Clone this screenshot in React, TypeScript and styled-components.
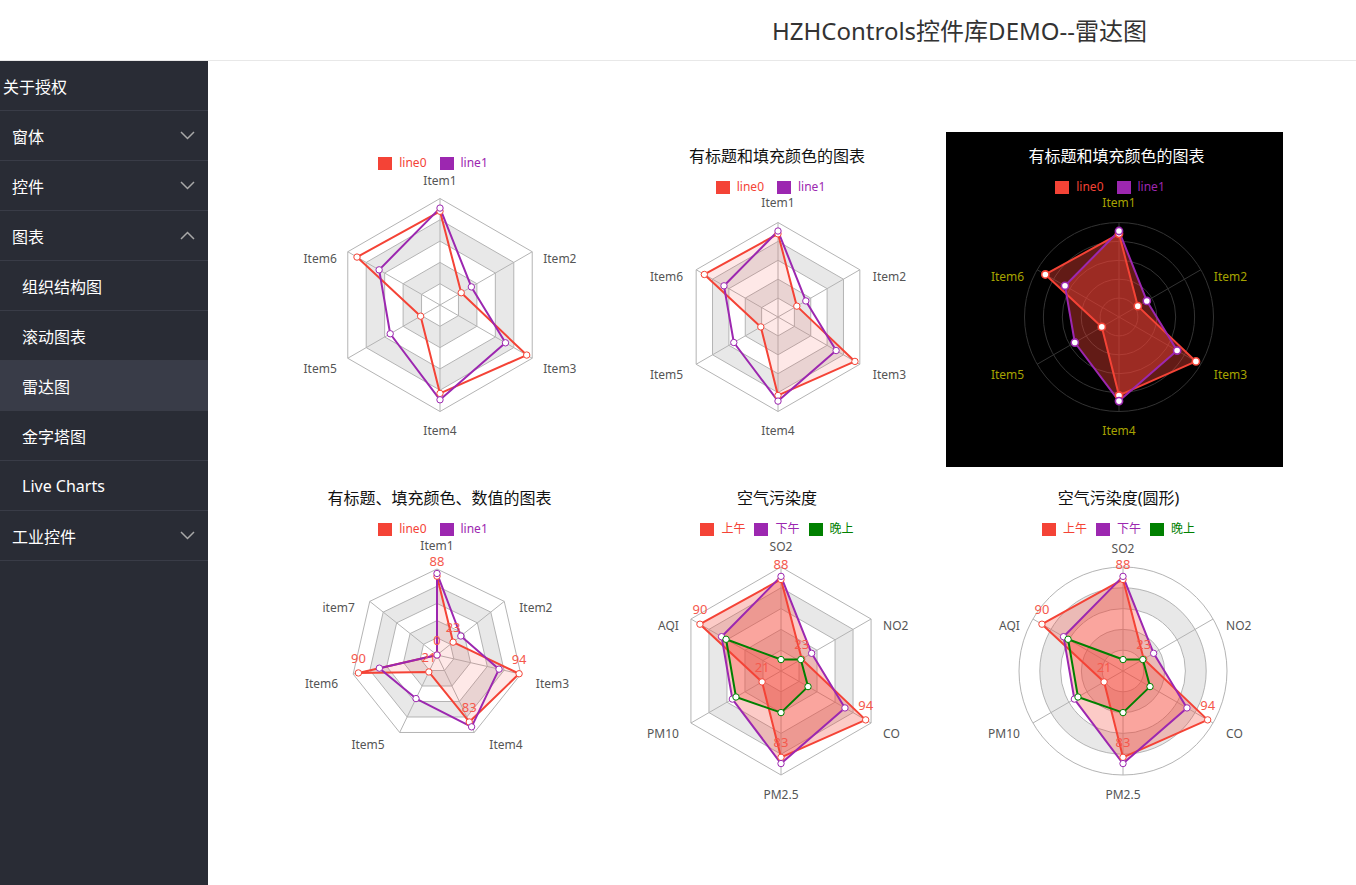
import React from "react";
import styled, { createGlobalStyle } from "styled-components";

const RED = "#f44336";
const PURPLE = "#9c27b0";
const GREEN = "#008000";

const GlobalStyle = createGlobalStyle`
  html, body {
    margin: 0;
    padding: 0;
    background: #fff;
  }
  body {
    font-family: "Noto Sans", "Noto Sans CJK SC", sans-serif;
  }
`;

const Page = styled.div`
  display: flex;
  flex-direction: column;
  height: 100vh;
  overflow: hidden;
`;

const Header = styled.header`
  height: 60px;
  flex: none;
  display: flex;
  align-items: center;
  padding-left: 772px;
  border-bottom: 1px solid #e8e8e8;
`;

const HeaderTitle = styled.h1`
  margin: 0;
  font-size: 24px;
  font-weight: 400;
  line-height: 1;
  color: #333;
  padding-top: 2px;
`;

const Body = styled.div`
  flex: 1;
  display: flex;
  min-height: 0;
`;

const Sidebar = styled.nav`
  width: 208px;
  flex: none;
  background: #292c35;
  display: flex;
  flex-direction: column;
`;

const MenuItem = styled.div<{ $indent: number; $active?: boolean }>`
  height: 49px;
  flex: none;
  display: flex;
  align-items: center;
  justify-content: space-between;
  padding: 0 13px 0 ${(p) => p.$indent}px;
  border-bottom: 1px solid #393c47;
  background: ${(p) => (p.$active ? "#393c48" : "transparent")};
  color: #fff;
  font-size: 16px;
`;

const Main = styled.main`
  flex: 1;
  padding: 71px 0 0 63px;
`;

const ChartGrid = styled.div`
  display: grid;
  grid-template-columns: 337px 338px 337px;
  grid-auto-rows: 335px;
  row-gap: 7px;
`;

const ChartCard = styled.div<{ $dark?: boolean; $shift: number }>`
  display: flex;
  flex-direction: column;
  align-items: center;
  padding-left: ${(p) => p.$shift}px;
  background: ${(p) => (p.$dark ? "#000" : "transparent")};
`;

const ChartTitle = styled.div<{ $dark?: boolean }>`
  margin-top: 14px;
  height: 20px;
  line-height: 20px;
  font-size: 16px;
  color: ${(p) => (p.$dark ? "#fff" : "#111")};
`;

const Legend = styled.div<{ $top: number; $itemGap: number; $trail: number }>`
  margin-top: ${(p) => p.$top}px;
  height: 14px;
  display: flex;
  align-items: center;
  gap: ${(p) => p.$itemGap}px;
  padding-right: ${(p) => p.$trail}px;
`;

const LegendItem = styled.div<{ $color: string }>`
  display: flex;
  align-items: center;
  gap: 7px;
  font-size: 12px;
  line-height: 14px;
  color: ${(p) => p.$color};
`;

const Swatch = styled.span<{ $color: string }>`
  width: 14px;
  height: 13px;
  background: ${(p) => p.$color};
`;

const Plot = styled.svg`
  display: block;
  flex: none;
  overflow: visible;
  font-family: "Noto Sans", "Noto Sans CJK SC", sans-serif;
`;

type Series = { name: string; color: string; values: number[]; fill?: string };

type ChartConfig = {
  title?: string;
  dark?: boolean;
  indicators: string[];
  series: Series[];
  max: number;
  cx: number;
  cy: number;
  r: number;
  shape: "polygon" | "circle";
  showValues?: boolean;
  sideGap?: number;
  topGap?: number;
  shift?: number;
  cjkLegend?: boolean;
};

const CARD_H = 335;
const CARD_W = 337;
const LEVELS = 5;

const Chevron = ({ up }: { up?: boolean }) => (
  <svg width="15" height="9" viewBox="0 0 15 9">
    <polyline
      points={up ? "1,8 7.5,1.5 14,8" : "1,1 7.5,7.5 14,1"}
      fill="none"
      stroke="#a8a8a8"
      strokeWidth="1.5"
    />
  </svg>
);

const Radar = ({ cfg, top }: { cfg: ChartConfig; top: number }) => {
  const n = cfg.indicators.length;
  const shift = cfg.shift ?? 0;
  const cx = cfg.cx - shift;
  const cy = cfg.cy - top;
  const width = CARD_W - shift;
  const ang = (k: number) => ((-90 + (k * 360) / n) * Math.PI) / 180;
  const pt = (k: number, rr: number): [number, number] => [
    cx + rr * Math.cos(ang(k)),
    cy + rr * Math.sin(ang(k)),
  ];
  const polyPoints = (rr: number[]) =>
    rr.map((v, k) => pt(k, v).map((c) => c.toFixed(2)).join(",")).join(" ");
  const ring = (rr: number, fill: string, stroke: string, key: string) =>
    cfg.shape === "circle" ? (
      <circle key={key} cx={cx} cy={cy} r={rr} fill={fill} stroke={stroke} />
    ) : (
      <polygon key={key} points={polyPoints(new Array(n).fill(rr))} fill={fill} stroke={stroke} />
    );

  const gridStroke = cfg.dark ? "#333" : "#b4b4b4";
  const labelColor = cfg.dark ? "#a6a300" : "#555";
  const sideGap = cfg.sideGap ?? 13;
  const topGap = cfg.topGap ?? 20;
  const levels = Array.from({ length: LEVELS }, (_, i) => LEVELS - i);

  return (
    <Plot width={width} height={CARD_H - top} viewBox={`0 0 ${width} ${CARD_H - top}`}>
      {levels.map((lvl) =>
        ring(
          (cfg.r * lvl) / LEVELS,
          cfg.dark ? "none" : lvl % 2 === 0 ? "#e8e8e8" : "#fff",
          gridStroke,
          `ring${lvl}`
        )
      )}
      {cfg.indicators.map((_, k) => {
        const [x, y] = pt(k, cfg.r);
        return <line key={`ax${k}`} x1={cx} y1={cy} x2={x} y2={y} stroke={gridStroke} />;
      })}
      {cfg.series.map((s) =>
        s.fill ? (
          <polygon
            key={`fill-${s.name}`}
            points={polyPoints(s.values.map((v) => (v / cfg.max) * cfg.r))}
            fill={s.fill}
            stroke="none"
          />
        ) : null
      )}
      {cfg.series.map((s) => (
        <polygon
          key={`line-${s.name}`}
          points={polyPoints(s.values.map((v) => (v / cfg.max) * cfg.r))}
          fill="none"
          stroke={s.color}
          strokeWidth={2}
          strokeLinejoin="round"
        />
      ))}
      {cfg.series.map((s) =>
        s.values.map((v, k) => {
          const [x, y] = pt(k, (v / cfg.max) * cfg.r);
          return (
            <circle
              key={`m-${s.name}-${k}`}
              cx={x}
              cy={y}
              r={cfg.dark ? 3.6 : 3.2}
              fill="#fff"
              stroke={s.color}
              strokeWidth={cfg.dark ? 1.6 : 1}
            />
          );
        })
      )}
      {cfg.showValues &&
        cfg.series[0].values.map((v, k) => {
          const [x, y] = pt(k, (v / cfg.max) * cfg.r);
          return (
            <text
              key={`v${k}`}
              x={x}
              y={y - 15}
              fontSize={13}
              fill="#f5584c"
              textAnchor="middle"
              dominantBaseline="central"
            >
              {v}
            </text>
          );
        })}
      {cfg.indicators.map((name, k) => {
        const [vx, vy] = pt(k, cfg.r);
        const c = Math.cos(ang(k));
        const s = Math.sin(ang(k));
        let x = vx;
        let y = vy;
        let anchor: "start" | "middle" | "end" = "middle";
        if (Math.abs(c) < 0.05) {
          y = s < 0 ? vy - topGap : vy + 19;
        } else {
          anchor = c > 0 ? "start" : "end";
          x = vx + (c > 0 ? sideGap : -sideGap);
          y = vy + 8.5 + 3.5 * s;
        }
        return (
          <text
            key={`l${k}`}
            x={x}
            y={y}
            fontSize={12}
            fill={labelColor}
            textAnchor={anchor}
            dominantBaseline="central"
          >
            {name}
          </text>
        );
      })}
    </Plot>
  );
};

const RadarCard = ({ cfg }: { cfg: ChartConfig }) => {
  const top = cfg.title ? 62 : 38;
  return (
    <ChartCard $dark={cfg.dark} $shift={cfg.shift ?? 0}>
      {cfg.title && <ChartTitle $dark={cfg.dark}>{cfg.title}</ChartTitle>}
      <Legend
        $top={cfg.title ? 14 : 24}
        $itemGap={cfg.cjkLegend ? 9 : 13}
        $trail={cfg.cjkLegend ? 0 : 13}
      >
        {cfg.series.map((s) => (
          <LegendItem key={s.name} $color={s.color}>
            <Swatch $color={s.color} />
            {s.name}
          </LegendItem>
        ))}
      </Legend>
      <Radar cfg={cfg} top={top} />
    </ChartCard>
  );
};

const items6 = ["Item1", "Item2", "Item3", "Item4", "Item5", "Item6"];
const items7 = [...items6, "item7"];
const air = ["SO2", "NO2", "CO", "PM2.5", "PM10", "AQI"];

const v0 = [88, 23, 94, 83, 21, 90];
const v1 = [91, 34, 71, 89, 54, 66];
const v2 = [11, 22, 30, 40, 50, 61];

const charts: ChartConfig[] = [
  {
    indicators: items6,
    series: [
      { name: "line0", color: RED, values: v0 },
      { name: "line1", color: PURPLE, values: v1 },
    ],
    max: 100,
    cx: 169,
    cy: 173,
    r: 106.5,
    shape: "polygon",
    sideGap: 11,
    topGap: 18,
  },
  {
    title: "有标题和填充颜色的图表",
    indicators: items6,
    series: [
      { name: "line0", color: RED, values: v0, fill: "rgba(244,67,54,0.12)" },
      { name: "line1", color: PURPLE, values: v1 },
    ],
    max: 100,
    cx: 169,
    cy: 185,
    r: 94.5,
    shape: "polygon",
  },
  {
    title: "有标题和填充颜色的图表",
    dark: true,
    shift: 4,
    indicators: items6,
    series: [
      { name: "line0", color: RED, values: v0, fill: "rgba(244,67,54,0.4)" },
      { name: "line1", color: PURPLE, values: v1, fill: "rgba(244,67,54,0.4)" },
    ],
    max: 100,
    cx: 173,
    cy: 185,
    r: 94.5,
    shape: "circle",
  },
  {
    title: "有标题、填充颜色、数值的图表",
    indicators: items7,
    series: [
      { name: "line0", color: RED, values: [...v0, 0], fill: "rgba(244,67,54,0.12)" },
      { name: "line1", color: PURPLE, values: [...v1, 0] },
    ],
    max: 96,
    cx: 166,
    cy: 181,
    r: 86,
    shape: "polygon",
    showValues: true,
    sideGap: 15,
    topGap: 24,
  },
  {
    title: "空气污染度",
    cjkLegend: true,
    indicators: air,
    series: [
      { name: "上午", color: RED, values: v0, fill: "rgba(244,67,54,0.28)" },
      { name: "下午", color: PURPLE, values: v1, fill: "rgba(244,67,54,0.28)" },
      { name: "晚上", color: GREEN, values: v2, fill: "rgba(244,67,54,0.28)" },
    ],
    max: 100,
    cx: 172,
    cy: 197,
    r: 104,
    shape: "polygon",
    showValues: true,
    sideGap: 12,
    topGap: 21,
  },
  {
    title: "空气污染度(圆形)",
    cjkLegend: true,
    shift: 8,
    indicators: air,
    series: [
      { name: "上午", color: RED, values: v0, fill: "rgba(244,67,54,0.28)" },
      { name: "下午", color: PURPLE, values: v1, fill: "rgba(244,67,54,0.28)" },
      { name: "晚上", color: GREEN, values: v2, fill: "rgba(244,67,54,0.28)" },
    ],
    max: 100,
    cx: 177,
    cy: 197,
    r: 104,
    shape: "circle",
    showValues: true,
    sideGap: 13,
    topGap: 19,
  },
];

type Menu = { label: string; indent: number; chevron?: "up" | "down"; active?: boolean };

const menu: Menu[] = [
  { label: "关于授权", indent: 3 },
  { label: "窗体", indent: 12, chevron: "down" },
  { label: "控件", indent: 12, chevron: "down" },
  { label: "图表", indent: 12, chevron: "up" },
  { label: "组织结构图", indent: 22 },
  { label: "滚动图表", indent: 22 },
  { label: "雷达图", indent: 22, active: true },
  { label: "金字塔图", indent: 22 },
  { label: "Live Charts", indent: 22 },
  { label: "工业控件", indent: 12, chevron: "down" },
];

export default function App() {
  return (
    <Page>
      <GlobalStyle />
      <Header>
        <HeaderTitle>HZHControls控件库DEMO--雷达图</HeaderTitle>
      </Header>
      <Body>
        <Sidebar>
          {menu.map((m) => (
            <MenuItem key={m.label} $indent={m.indent} $active={m.active}>
              <span>{m.label}</span>
              {m.chevron && <Chevron up={m.chevron === "up"} />}
            </MenuItem>
          ))}
        </Sidebar>
        <Main>
          <ChartGrid>
            {charts.map((c, i) => (
              <RadarCard key={i} cfg={c} />
            ))}
          </ChartGrid>
        </Main>
      </Body>
    </Page>
  );
}
